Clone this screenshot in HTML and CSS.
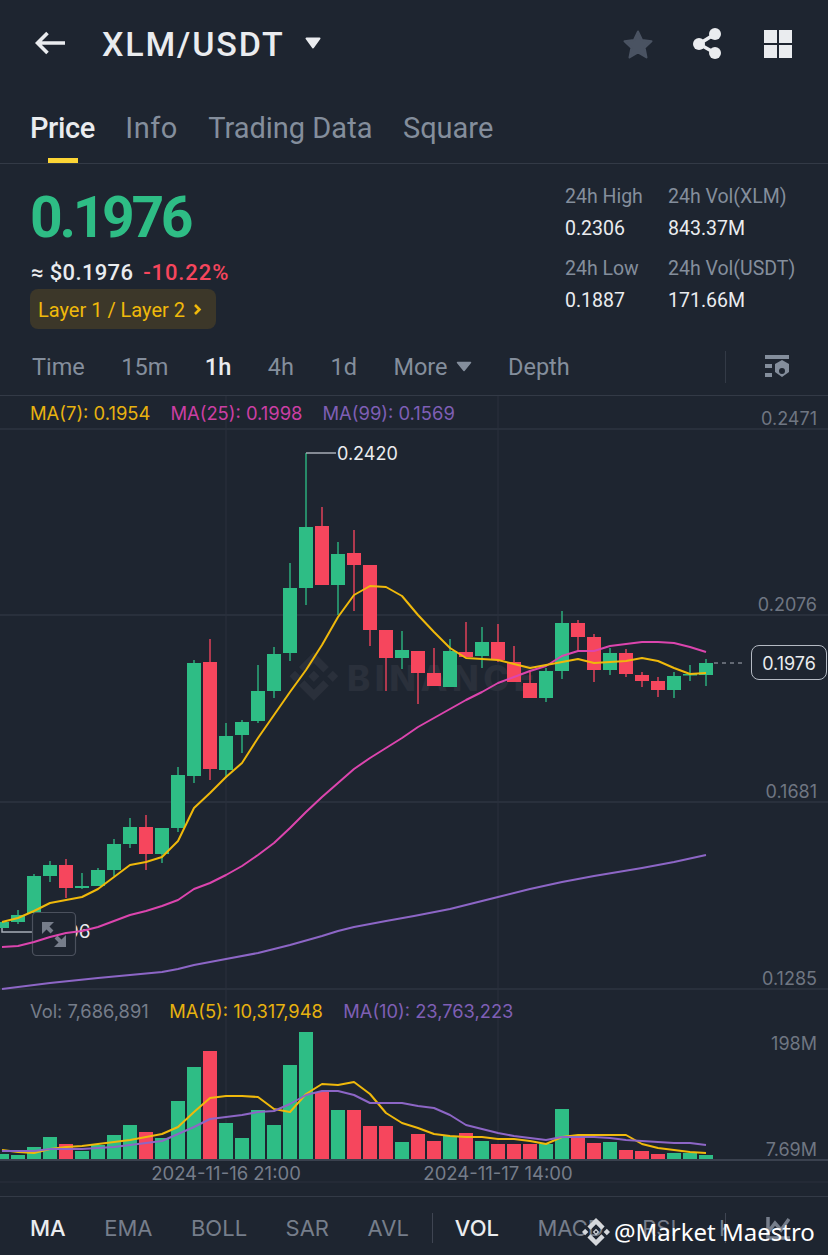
FILE: index.html
```html
<!DOCTYPE html>
<html lang="en">
<head>
<meta charset="utf-8">
<title>XLM/USDT</title>
<link rel="stylesheet" href="styles.css">
</head>
<body>
<div class="screen">
  <header class="topbar">
    <svg class="icon-back" viewBox="0 0 32 26"><path d="M30 12H3M12.500 2 2.500 12l10 10"/></svg>
    <h1 class="pair">XLM/USDT</h1>
    <svg class="icon-caret" viewBox="0 0 16 12"><path d="M1.500 1.500h13L8 10.500z"/></svg>
    <div class="top-actions">
      <svg class="icon-action" viewBox="0 0 32 32"><path class="star" d="M16 3.500 20 12l9.500 1.300-6.900 6.500 1.900 9.700-8.500-5-8.500 5 1.900-9.700-6.900-6.500L12 12z"/></svg>
      <svg class="icon-action" viewBox="0 0 32 32"><g class="solid"><path class="share-link" d="M23 6 7 16l16 9"/><circle cx="23" cy="6" r="6"/><circle cx="7" cy="16" r="6"/><circle cx="23" cy="25" r="6"/></g></svg>
      <svg class="icon-action" viewBox="0 0 32 32"><g class="solid"><rect x="2" y="2" width="13" height="13"/><rect x="17" y="2" width="13" height="13"/><rect x="2" y="17" width="13" height="13"/><rect x="17" y="17" width="13" height="13"/></g></svg>
    </div>
  </header>

  <nav class="tabs">
    <span class="tab tab-active">Price</span>
    <span class="tab tab-info">Info</span>
    <span class="tab">Trading Data</span>
    <span class="tab">Square</span>
  </nav>

  <section class="summary">
    <div class="quote">
      <div class="last-price">0.1976</div>
      <div class="fiat">≈ $0.1976 <span class="change">-10.22%</span></div>
      <div class="chip">Layer 1 / Layer 2
        <svg class="icon-chevron" viewBox="0 0 9 13"><path d="M2 2l4.500 4.500L2 11"/></svg>
      </div>
    </div>
    <dl class="stats">
      <div class="stat"><dt>24h High</dt><dd>0.2306</dd></div>
      <div class="stat"><dt>24h Vol(XLM)</dt><dd>843.37M</dd></div>
      <div class="stat"><dt>24h Low</dt><dd>0.1887</dd></div>
      <div class="stat"><dt>24h Vol(USDT)</dt><dd>171.66M</dd></div>
    </dl>
  </section>

  <nav class="intervals">
    <span>Time</span>
    <span>15m</span>
    <span class="on">1h</span>
    <span>4h</span>
    <span>1d</span>
    <span class="more">More<svg class="icon-more" viewBox="0 0 16 11"><path d="M1.500 1.500h13L8 9.500z"/></svg></span>
    <span>Depth</span>
    <i class="rule"></i>
    <svg class="icon-settings" viewBox="0 0 24 24"><path d="M0 0h24v4H0zM0 9h7v4H0zM0 18h7v4H0z"/><path fill-rule="evenodd" d="M17 6l7 4v8l-7 5-7-5v-8zm0 8a3 3 0 1 0 0 6 3 3 0 0 0 0-6z" transform="translate(0 -1)"/></svg>
  </nav>

  <section class="chart">
    <div class="bn-mark">BINANCE</div>
    <div class="low-label">0.1906</div>
    <svg id="plot" class="plot" viewBox="0 396 828 800"></svg>

    <div class="legend legend-price">
      <span class="c-yellow">MA(7): 0.1954</span>
      <span class="c-pink">MA(25): 0.1998</span>
      <span class="c-purple">MA(99): 0.1569</span>
    </div>
    <div class="legend legend-vol">
      <span class="c-gray">Vol: 7,686,891</span>
      <span class="c-yellow">MA(5): 10,317,948</span>
      <span class="c-purple">MA(10): 23,763,223</span>
    </div>

    <span class="axis a1">0.2471</span>
    <span class="axis a2">0.2076</span>
    <span class="axis a3">0.1681</span>
    <span class="axis a4">0.1285</span>
    <span class="axis a5">198M</span>
    <span class="axis a6">7.69M</span>

    <span class="high-label">0.2420</span>
    <span class="price-tag">0.1976</span>

    <span class="date d1">2024-11-16 21:00</span>
    <span class="date d2">2024-11-17 14:00</span>
  </section>

  <nav class="indicators">
    <div class="ind-list">
      <span class="on">MA</span>
      <span>EMA</span>
      <span>BOLL</span>
      <span>SAR</span>
      <span>AVL</span>
      <i class="ind-rule"></i>
      <span class="on vol">VOL</span>
      <span>MACD</span>
      <span>RSI</span>
      <span class="kdj">KDJ</span>
    </div>
    <i class="ind-end"></i>
    <svg class="icon-kline" viewBox="0 0 24 24"><path d="M2 1v21h22M3 15l6-8 6 7 8-11"/></svg>
  </nav>

  <div class="watermark">
    <svg class="wm-logo" viewBox="0 0 126.610 126.610"><path d="M38.730 53.200l24.590-24.580 24.600 24.600 14.300-14.310L63.320 0 24.430 38.890z"/><path d="M0 63.310l14.300-14.310 14.310 14.310-14.310 14.300z"/><path d="M38.730 73.410l24.590 24.590 24.600-24.600 14.310 14.290-38.900 38.910-38.910-38.880z"/><path d="M98 63.310l14.300-14.310 14.310 14.300-14.310 14.320z"/><path fill-rule="evenodd" d="M77.830 63.300 63.320 48.780 48.810 63.280l14.510 14.510zM70.500 63.300l-7.180 7.160-7.180-7.180 7.180-7.170z"/></svg>
    <span>@Market Maestro</span>
  </div>
</div>
<script src="chart.js"></script>
</body>
</html>
```

FILE: styles.css
```css
* { box-sizing: border-box; }
html, body { margin: 0; padding: 0; }
body {
  width: 828px;
  height: 1255px;
  overflow: hidden;
  background: #1e2530;
  color: #eaecef;
  font-family: Roboto, "Liberation Sans", sans-serif;
}
.screen { position: relative; display: flex; flex-direction: column; width: 828px; height: 1255px; }

/* top bar */
.topbar { display: flex; align-items: center; height: 88px; padding: 0 34px 0 35px; flex: none; }
.icon-back { width: 32px; height: 26px; fill: none; stroke: #eaecef; stroke-width: 3.6; margin-right: 35px; }
.pair { margin: 0; font-size: 34px; font-weight: 500; letter-spacing: 1.850px; line-height: 40px; }
.icon-caret { width: 16px; height: 12px; margin: 0 0 3px 20px; fill: #eaecef; stroke: #eaecef; stroke-width: 2; stroke-linejoin: round; }
.top-actions { display: flex; gap: 38px; margin-left: auto; }
.icon-action { width: 32px; height: 32px; }
.star { fill: #4a5362; stroke: #4a5362; stroke-width: 2; stroke-linejoin: round; }
.solid { fill: #eaecef; }
.share-link { fill: none; stroke: #eaecef; stroke-width: 3.5; }

/* tabs */
.tabs { display: flex; gap: 30.500px; height: 76px; padding: 20px 0 0 30px; border-bottom: 1px solid #333a46; flex: none; }
.tab { position: relative; font-size: 29px; line-height: 40px; color: #848e9c; height: 40px; }
.tab-info { letter-spacing: .450px; }
.tab-active { color: #eaecef; font-weight: 500; letter-spacing: -.400px; }
.tab-active::after {
  content: "";
  position: absolute;
  left: 18px;
  top: 50px;
  width: 30px;
  height: 5px;
  background: #fcd535;
}

/* summary */
.summary { display: flex; justify-content: space-between; height: 180px; padding-left: 31px; flex: none; }
.quote { padding-top: 24px; }
.last-price { margin-left: -1px; font-size: 57px; font-weight: 700; line-height: 60px; color: #2ebd85; letter-spacing: -3.300px; }
.fiat { margin-top: 10px; font-size: 22px; line-height: 30px; font-weight: 500; color: #eaecef; letter-spacing: .350px; }
.change { color: #f6465d; margin-left: 4px; letter-spacing: .900px; }
.chip {
  display: inline-flex;
  align-items: center;
  gap: 8px;
  height: 40px;
  margin-top: 1px;
  margin-left: -1px;
  padding: 2px 14px 0 8px;
  border-radius: 8px;
  background: #3c3729;
  color: #f0b90b;
  font-size: 20px;
  letter-spacing: 0;
}
.icon-chevron { width: 9px; height: 13px; margin-top: -2px; fill: none; stroke: #f0b90b; stroke-width: 2.600; }
.stats {
  display: grid;
  grid-template-columns: 103px 160px;
  row-gap: 8px;
  align-content: start;
  margin: 17px 0 0;
}
.stat { margin: 0; }
.stat dt { font-size: 19.500px; line-height: 32px; color: #848e9c; white-space: nowrap; }
.stat dd { margin: 0; font-size: 19.500px; line-height: 32px; color: #eaecef; white-space: nowrap; }

/* intervals */
.intervals {
  display: flex;
  align-items: center;
  gap: 36.500px;
  height: 52px;
  padding: 0 39px 6px 32px;
  border-bottom: 1px solid #333a46;
  font-size: 23.500px;
  color: #848e9c;
  flex: none;
}
.intervals .on { color: #eaecef; font-weight: 500; }
.more { display: inline-flex; align-items: center; gap: 8px; }
.icon-more { width: 16px; height: 11px; fill: #848e9c; stroke: #848e9c; stroke-width: 1.500; stroke-linejoin: round; }
.rule { width: 1px; height: 32px; background: #333a46; margin: 0 2.500px 0 auto; }
.icon-settings { width: 24px; height: 24px; fill: #848e9c; }

/* chart */
.chart { position: relative; height: 800px; flex: none; font-family: Inter, "Liberation Sans", sans-serif; font-size: 18px; }
.plot { position: absolute; left: 0; top: 0; width: 828px; height: 800px; }
.plot .grid { stroke: #2e3440; stroke-width: 1.500; }
.plot .grid-soft { stroke: #2b313c; stroke-width: 1; }
.plot .base { stroke: #3a414e; stroke-width: 2; }
.plot .up { fill: #2ebd85; }
.plot .down { fill: #f6465d; }
.plot .wick-up { fill: #2ba377; }
.plot .wick-down { fill: #d43f56; }
.plot .line { fill: none; stroke-width: 2; stroke-linejoin: round; }
.plot .l-yellow { stroke: #f0b90b; }
.plot .l-pink { stroke: #dc45ae; }
.plot .l-purple { stroke: #8d66c6; }
.plot .lead { fill: none; stroke: #a7adb6; stroke-width: 1.500; }
.plot .dash { stroke: #a7adb6; stroke-width: 1; stroke-dasharray: 4 4; }
.plot .box { fill: #1e2530; stroke: #4b515d; stroke-width: 1.200; }
.plot .box-icon { fill: #767d8a; }
.plot .box-stem { stroke: #767d8a; stroke-width: 4; }

.bn-mark {
  position: absolute;
  left: 347px;
  top: 260px;
  font-size: 35px;
  line-height: 44px;
  font-weight: 800;
  letter-spacing: 4.500px;
  color: #2a303b;
}
.low-label { position: absolute; left: 32px; top: 525px; font-size: 19px; line-height: 22px; color: #eaecef; }
.legend { position: absolute; left: 30px; display: flex; gap: 20px; line-height: 22px; white-space: nowrap; }
.legend-price { top: 6px; font-size: 18.400px; }
.legend-vol { top: 604px; font-size: 18.300px; gap: 20.500px; }
.c-yellow { color: #e8b20f; }
.c-pink { color: #cb3fa4; }
.c-purple { color: #7f5fb5; }
.c-gray { color: #767d8a; }
.axis { position: absolute; right: 11px; line-height: 22px; color: #6f7682; }
.a1 { top: 12px; }
.a2 { top: 198px; }
.a3 { top: 385px; }
.a4 { top: 572px; }
.a5 { top: 637px; }
.a6 { top: 743px; }
.high-label { position: absolute; left: 337px; top: 47px; line-height: 22px; color: #eaecef; }
.price-tag {
  position: absolute;
  left: 751px;
  top: 249px;
  width: 76px;
  height: 35px;
  border: 1.500px solid #b4bac3;
  border-radius: 8px;
  background: #1e2530;
  color: #eaecef;
  line-height: 35px;
  text-align: center;
}
.date { position: absolute; top: 766px; font-size: 18.500px; line-height: 22px; color: #767d8a; transform: translateX(-50%); white-space: nowrap; }
.d1 { left: 226px; }
.d2 { left: 498px; }

/* indicators */
.indicators {
  display: flex;
  align-items: center;
  height: 59px;
  padding: 4px 38px 0 30px;
  border-top: 1px solid #333a46;
  font-family: Inter, "Liberation Sans", sans-serif;
  font-size: 22px;
  color: #767e8b;
  flex: none;
}
.ind-list { display: flex; align-items: center; gap: 38.500px; width: 695px; flex: none; overflow: hidden; white-space: nowrap; }
.ind-list .on { color: #eaecef; font-weight: 500; }
.ind-rule { width: 1px; height: 30px; margin: 0 -16.500px 0 -15.500px; background: #3f4552; flex: none; }
.kdj { margin-left: 4px; }
.ind-end { width: 1px; height: 30px; background: #3f4552; flex: none; }
.icon-kline { width: 24px; height: 24px; margin-left: auto; fill: none; stroke: #767e8b; stroke-width: 3.500; }

/* watermark */
.watermark {
  position: absolute;
  left: 582px;
  top: 1217px;
  display: flex;
  align-items: center;
  gap: 4px;
  color: #ffffff;
  font-family: "Noto Sans", sans-serif;
  font-size: 24px;
  line-height: 29px;
  white-space: nowrap;
}
.wm-logo { width: 28px; height: 28px; fill: #d5d8dc; }
```

FILE: chart.js
```js
// [direction, wickHigh, wickLow, bodyTop, bodyBottom]
var candles = [
  ['u',923,928,922,928],['u',910,924,915,922],['u',874,913,876,913],['u',861,882,865,876],
  ['d',859,898,865,888],['u',873,889,886,888],['u',868,886,870,886],['u',839,876,844,870],
  ['u',818,848,827,844],['d',815,870,827,854],['u',828,863,828,854],['u',767,832,775,828],
  ['u',660,783,663,776],['d',639,780,662,769],['u',723,778,736,770],['u',720,753,722,735],
  ['u',665,723,691,721],['u',647,698,654,691],['u',563,661,588,653],['u',453,605,527,588],
  ['d',507,585,526,585],['u',542,615,554,585],['d',530,611,553,565],['d',565,646,565,630],
  ['d',630,691,630,658],['u',631,669,650,658],['d',651,704,651,673],['d',648,686,673,686],
  ['u',639,687,651,687],['d',622,657,652,657],['u',627,668,642,656],['d',624,662,642,660],
  ['d',646,682,662,682],['d',670,698,683,698],['u',668,702,671,698],['u',611,679,623,671],
  ['d',620,651,623,637],['d',634,682,637,670],['u',648,675,653,670],['d',649,677,653,674],
  ['d',672,687,675,681],['d',677,697,681,690],['u',672,698,676,690],['u',665,681,674,675],
  ['u',659,686,663,675]
];
var volumes = [1154,1155,1147,1137,1144,1151,1145,1135,1125,1132,1138,1101,1067,1051,1123,1138,1110,1125,1065,1032,1092,1110,1110,1126,1126,1142,1134,1141,1136,1133,1141,1144,1144,1144,1144,1109,1138,1143,1142,1150,1151,1154,1153,1153,1155];

function cx(i) { return 2 + 16 * i; }
function series(ys) {
  return ys.map(function (y, i) { return cx(i) + ',' + y; }).join(' ');
}
var ma7 = [922,918,911,903,900,897,889,877,865,862,857,841,808,793,777,763,738,715,692,670,645,617,595,586,587,596,615,632,648,658,659,660,664,668,665,662,659,663,662,661,658,661,668,674,673];
var ma25 = [947,946,942,937,933,931,927,921,915,911,906,900,889,883,875,866,855,843,828,812,797,783,769,758,748,738,727,718,709,700,692,683,677,671,666,656,651,651,646,644,642,642,643,647,652];
var ma99Pts = '2,989 50,983 98,978 162,972 178,969 194,965 226,959 258,953 290,945 322,936 338,931 354,927 386,921 414,916 450,909 498,897 530,889 562,882 594,876 642,868 674,862 706,855';
var vma5 = [1150,1152,1153,1149,1147,1146,1144,1142,1140,1137,1134,1127,1112,1098,1096,1096,1097,1109,1112,1094,1084,1085,1082,1094,1113,1123,1128,1134,1136,1137,1137,1139,1139,1141,1144,1137,1135,1135,1135,1135,1144,1148,1150,1152,1153];
var vma10 = [1151,1151,1151,1149,1149,1149,1148,1147,1145,1143,1141,1134,1127,1119,1117,1115,1112,1111,1104,1095,1091,1091,1095,1103,1103,1103,1106,1108,1115,1125,1129,1133,1136,1138,1140,1137,1137,1137,1138,1140,1141,1142,1143,1143,1145];

var NS = 'http://www.w3.org/2000/svg';
var plot = document.getElementById('plot');
function el(tag, cls, attrs) {
  var n = document.createElementNS(NS, tag);
  if (cls) n.setAttribute('class', cls);
  for (var k in attrs) n.setAttribute(k, attrs[k]);
  plot.appendChild(n);
  return n;
}
function hline(y, cls) { el('line', cls, { x1: 0, x2: 828, y1: y, y2: y }); }

// grid
[429, 615, 802, 989].forEach(function (y) { hline(y, 'grid'); });
hline(1182, 'grid-soft');
[226, 498].forEach(function (x) { el('line', 'grid-soft', { x1: x, x2: x, y1: 396, y2: 1160 }); });
hline(1160, 'base');

// BINANCE mark on the canvas
var mark = el('g', '', { transform: 'translate(289.500 652) scale(.385)', fill: '#2a303b' });
['M38.73 53.2l24.59-24.58 24.6 24.6 14.3-14.31L63.32 0 24.43 38.89z',
 'M0 63.31l14.3-14.31 14.31 14.31-14.31 14.3z',
 'M38.73 73.41l24.59 24.59 24.6-24.6 14.31 14.29-38.9 38.91-38.91-38.88z',
 'M98 63.31l14.3-14.31 14.31 14.3-14.31 14.32z',
 'M77.83 63.3L63.32 48.78 48.81 63.28l14.51 14.51z'].forEach(function (d) {
  var p = document.createElementNS(NS, 'path');
  p.setAttribute('d', d);
  mark.appendChild(p);
});

// candles
candles.forEach(function (c, i) {
  var x = cx(i);
  el('rect', c[0] === 'u' ? 'wick-up' : 'wick-down', { x: x - 0.8, y: c[1], width: 1.6, height: c[2] - c[1] });
  el('rect', c[0] === 'u' ? 'up' : 'down', { x: x - 7, y: c[3], width: 14, height: Math.max(c[4] - c[3], 1.5) });
});
// volume bars
volumes.forEach(function (y, i) {
  el('rect', candles[i][0] === 'u' ? 'up' : 'down', { x: cx(i) - 7, y: y, width: 14, height: 1159 - y });
});

// price pointers
el('path', 'lead', { d: 'M306 453H336' });
el('path', 'lead', { d: 'M2 928V932H32' });
el('line', 'dash', { x1: 714, x2: 744, y1: 663, y2: 663 });

// fullscreen toggle
el('rect', 'box', { x: 32.500, y: 912.500, width: 43, height: 43, rx: 4 });
el('path', 'box-icon', { d: 'M42 922H54L42 934z' });
el('path', 'box-icon', { d: 'M66 947H54L66 935z' });
el('line', 'box-stem', { x1: 46, y1: 926, x2: 52, y2: 932 });
el('line', 'box-stem', { x1: 62, y1: 943, x2: 56, y2: 937 });

// moving averages
el('polyline', 'line l-purple', { points: ma99Pts });
el('polyline', 'line l-pink', { points: series(ma25) });
el('polyline', 'line l-yellow', { points: series(ma7) });
el('polyline', 'line l-yellow', { points: series(vma5) });
el('polyline', 'line l-purple', { points: series(vma10) });
```
